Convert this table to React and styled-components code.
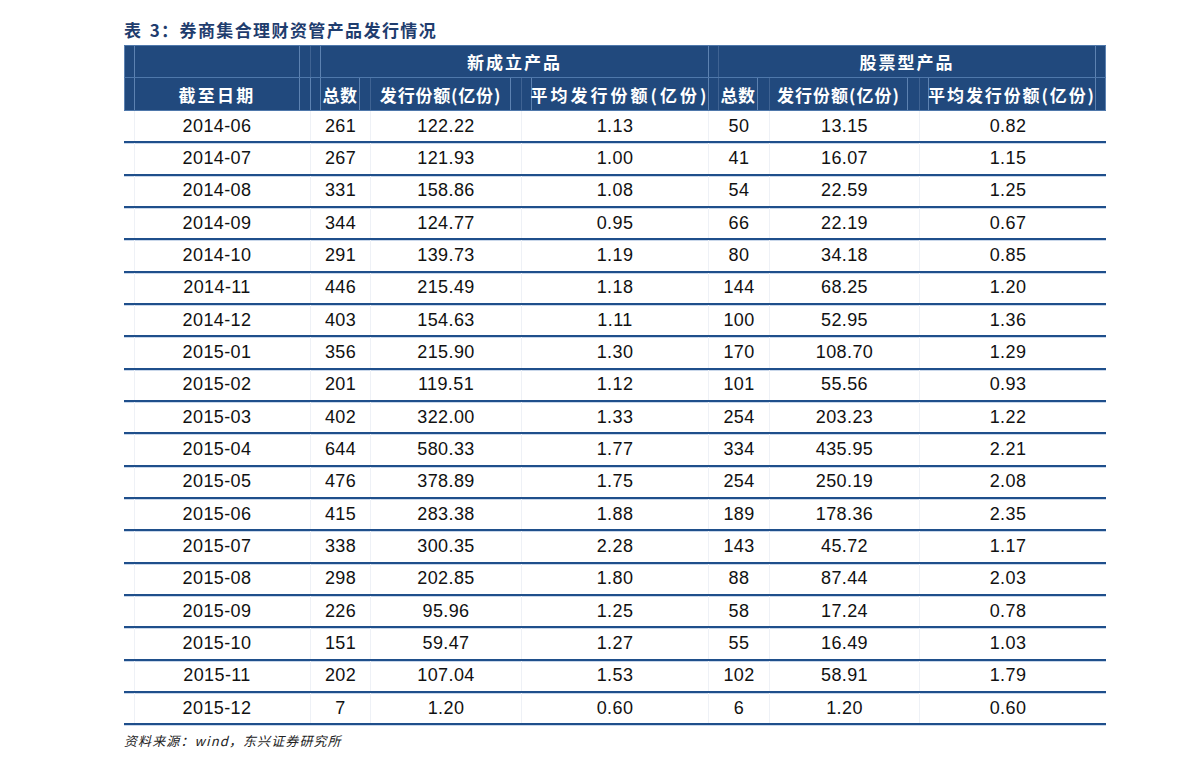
import React from 'react'
import styled, { createGlobalStyle } from 'styled-components'

const GlobalStyle = createGlobalStyle`
  html, body {
    margin: 0;
    padding: 0;
    background: #ffffff;
  }
  * {
    box-sizing: border-box;
  }
`

const COLS = '11px 165px 11px 10px 39px 11px 140px 11px 10px 177px 10px 39px 12px 138px 12px 9px 167px 10px'

const Page = styled.div`
  padding: 19px 0 0 124px;
  width: 1191px;
  height: 765px;
  font-family: "Liberation Sans", "Noto Sans CJK SC", sans-serif;
`

const Title = styled.div`
  font-family: "Noto Sans CJK SC", sans-serif;
  font-weight: 700;
  font-size: 17px;
  letter-spacing: 1.4px;
  word-spacing: 2px;
  color: #1f3d6e;
  height: 22px;
  line-height: 22px;
  margin-bottom: 4px;
`

const Table = styled.div`
  width: 982px;
`

const HeadRow = styled.div`
  display: grid;
  grid-template-columns: ${COLS};
  height: 33px;
  background: #21497d;
  border-top: ${(p) => (p.$first ? '1px solid #4f78ab' : 'none')};
  border-bottom: 1px solid #4f78ab;
`

const HeadCell = styled.div`
  grid-column: ${(p) => p.$col};
  display: flex;
  align-items: center;
  justify-content: center;
  color: #ffffff;
  font-family: "Noto Sans CJK SC", sans-serif;
  font-weight: 700;
  font-size: 17px;
  letter-spacing: ${(p) => p.$ls ?? 1.5}px;
  white-space: nowrap;
  border-right: 1px solid ${(p) => (p.$faint ? 'rgba(120,150,190,0.35)' : 'rgba(120,155,200,0.7)')};
  border-left: ${(p) => (p.$edge ? '1px solid rgba(120,155,200,0.7)' : 'none')};
`

const DataRow = styled.div`
  display: grid;
  grid-template-columns: ${COLS};
  height: 32.33px;
  border-bottom: 2px solid #1f4f8b;
  box-shadow: 0 1px 0 #c9d7ea;
`

const DataCell = styled.div`
  grid-column: ${(p) => p.$col};
  display: flex;
  align-items: center;
  justify-content: center;
  padding-right: ${(p) => p.$pr || 0}px;
  font-size: 18px;
  letter-spacing: 0.4px;
  color: #111111;
  border-right: ${(p) => (p.$line ? '1px solid #eef1f6' : 'none')};
`

const Source = styled.div`
  margin-top: 6px;
  font-family: "Noto Sans CJK SC", sans-serif;
  font-style: italic;
  font-size: 13px;
  letter-spacing: 1.1px;
  color: #222222;
`

const rows = [
  ['2014-06', '261', '122.22', '1.13', '50', '13.15', '0.82'],
  ['2014-07', '267', '121.93', '1.00', '41', '16.07', '1.15'],
  ['2014-08', '331', '158.86', '1.08', '54', '22.59', '1.25'],
  ['2014-09', '344', '124.77', '0.95', '66', '22.19', '0.67'],
  ['2014-10', '291', '139.73', '1.19', '80', '34.18', '0.85'],
  ['2014-11', '446', '215.49', '1.18', '144', '68.25', '1.20'],
  ['2014-12', '403', '154.63', '1.11', '100', '52.95', '1.36'],
  ['2015-01', '356', '215.90', '1.30', '170', '108.70', '1.29'],
  ['2015-02', '201', '119.51', '1.12', '101', '55.56', '0.93'],
  ['2015-03', '402', '322.00', '1.33', '254', '203.23', '1.22'],
  ['2015-04', '644', '580.33', '1.77', '334', '435.95', '2.21'],
  ['2015-05', '476', '378.89', '1.75', '254', '250.19', '2.08'],
  ['2015-06', '415', '283.38', '1.88', '189', '178.36', '2.35'],
  ['2015-07', '338', '300.35', '2.28', '143', '45.72', '1.17'],
  ['2015-08', '298', '202.85', '1.80', '88', '87.44', '2.03'],
  ['2015-09', '226', '95.96', '1.25', '58', '17.24', '0.78'],
  ['2015-10', '151', '59.47', '1.27', '55', '16.49', '1.03'],
  ['2015-11', '202', '107.04', '1.53', '102', '58.91', '1.79'],
  ['2015-12', '7', '1.20', '0.60', '6', '1.20', '0.60'],
]

// where each value of a data row sits in the grid
const dataCols = [
  { col: '2 / 4', pr: 11 },
  { col: '4 / 7' },
  { col: '7 / 9' },
  { col: '9 / 11' },
  { col: '11 / 14' },
  { col: '14 / 16' },
  { col: '16 / 18' },
]

const secondHead = [
  { col: 1, text: '', edge: true },
  { col: 2, text: '截至日期', ls: 2.2 },
  { col: 3, text: '' },
  { col: 4, text: '' },
  { col: 5, text: '总数', ls: 0.6 },
  { col: 6, text: '', faint: true },
  { col: 7, text: '发行份额(亿份)', ls: 0.8 },
  { col: 8, text: '', faint: true },
  { col: 9, text: '' },
  { col: 10, text: '平均发行份额(亿份)', ls: 3 },
  { col: 11, text: '', faint: true },
  { col: 12, text: '总数', ls: 0.6 },
  { col: 13, text: '', faint: true },
  { col: 14, text: '发行份额(亿份)', ls: 1 },
  { col: 15, text: '', faint: true },
  { col: 16, text: '' },
  { col: 17, text: '平均发行份额(亿份)', ls: 1.9 },
  { col: 18, text: '' },
]

export default function App() {
  return (
    <Page>
      <GlobalStyle />
      <Title>表 3：券商集合理财资管产品发行情况</Title>
      <Table>
        <HeadRow $first>
          <HeadCell $col={1} $edge />
          <HeadCell $col={2} />
          <HeadCell $col={3} $faint />
          <HeadCell $col={4} />
          <HeadCell $col="5 / 11" $ls={2}>新成立产品</HeadCell>
          <HeadCell $col={11} $faint />
          <HeadCell $col="12 / 18" $ls={2}>股票型产品</HeadCell>
          <HeadCell $col={18} />
        </HeadRow>
        <HeadRow>
          {secondHead.map((h) => (
            <HeadCell key={h.col} $col={h.col} $ls={h.ls} $faint={h.faint} $edge={h.edge}>
              {h.text}
            </HeadCell>
          ))}
        </HeadRow>
        {rows.map((r) => (
          <DataRow key={r[0]}>
            <DataCell $col={1} $line />
            {r.map((v, i) => (
              <DataCell key={i} $col={dataCols[i].col} $pr={dataCols[i].pr} $line={i < 6}>
                {v}
              </DataCell>
            ))}
          </DataRow>
        ))}
      </Table>
      <Source>资料来源：wind，东兴证券研究所</Source>
    </Page>
  )
}
